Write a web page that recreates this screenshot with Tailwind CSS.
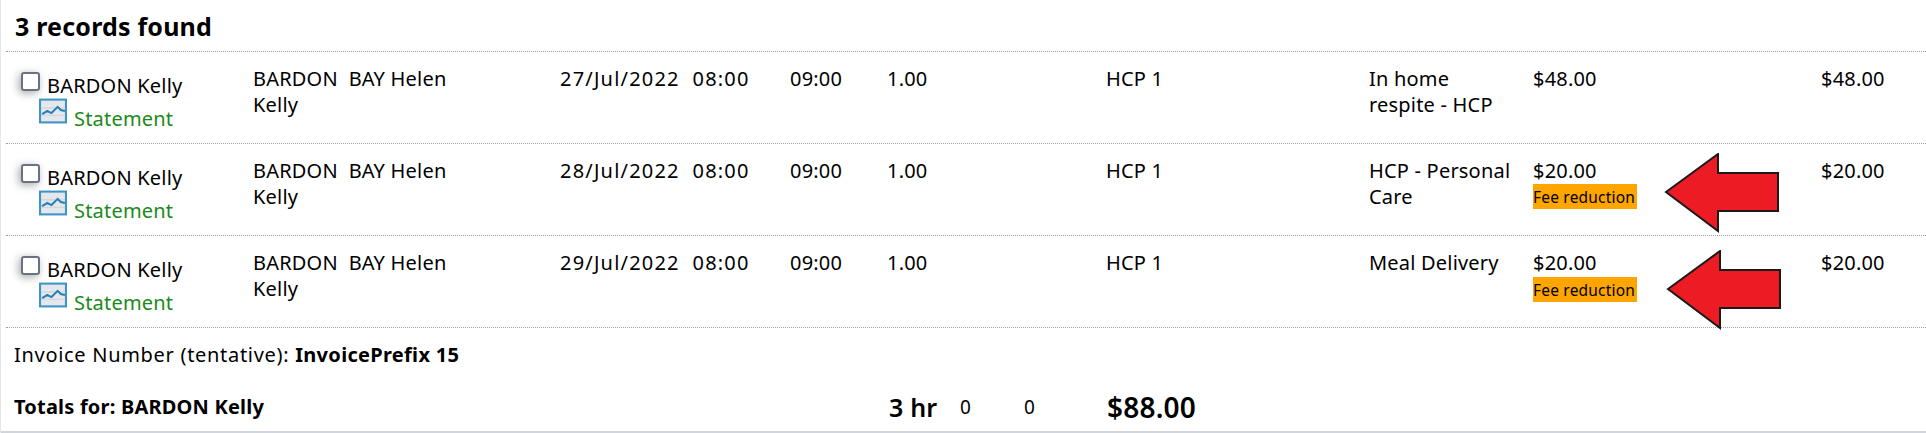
<!DOCTYPE html>
<html lang="en">
<head>
<meta charset="UTF-8">
<title>Records</title>
<script src="https://cdn.jsdelivr.net/npm/@tailwindcss/browser@4"></script>
</head>
<body class="bg-white text-black font-['Noto_Sans',sans-serif] text-[20px] leading-[26px] tracking-[0.2px] overflow-hidden">
<div class="h-[433px] flex flex-col border-l border-gray-200">
  <h2 class="h-[51px] pl-[14px] pt-[10px] text-[25px] leading-[32px] font-bold">3 records found</h2>

  <!-- rows -->
  <div class="ml-[5px] border-t border-dotted border-gray-400 flex h-[92px] pt-[14px]">
    <div class="w-[247px] shrink-0">
      <div class="flex items-start pl-[15px]">
        <input type="checkbox" class="appearance-none w-[19px] h-[19px] mt-[6px] rounded-[3px] border-2 border-gray-500 bg-white shadow-[-2px_2px_8px_rgba(0,0,0,0.35)]">
        <span class="ml-[7px] mt-[7px]">BARDON Kelly</span>
      </div>
      <div class="flex items-start pl-[33px] -mt-[1px]">
        <svg width="28" height="26" viewBox="0 0 27 24"><rect x="1" y="1" width="25" height="22" fill="#e4e8ec" stroke="#3f94c6" stroke-width="2"/><path d="M2 9h23M2 16h23" stroke="#cdd3d8"/><path d="M3 15l5-3 4 2 6-6 3 3 4 1" fill="none" stroke="#2b7fb8" stroke-width="2"/></svg>
        <span class="ml-[7px] mt-[8px] text-[#1a8a1a]">Statement</span>
      </div>
    </div>
    <div class="w-[307px] shrink-0">BARDON&nbsp; BAY Helen<br>Kelly</div>
    <div class="w-[230px] shrink-0 tracking-[1.2px]">27/Jul/2022&nbsp; 08:00</div>
    <div class="w-[97px] shrink-0">09:00</div>
    <div class="w-[219px] shrink-0">1.00</div>
    <div class="w-[263px] shrink-0">HCP 1</div>
    <div class="w-[164px] shrink-0">In home<br>respite - HCP</div>
    <div class="w-[288px] shrink-0">$48.00</div>
    <div>$48.00</div>
  </div>

  <div class="ml-[5px] border-t border-dotted border-gray-400 flex h-[92px] pt-[14px]">
    <div class="w-[247px] shrink-0">
      <div class="flex items-start pl-[15px]">
        <input type="checkbox" class="appearance-none w-[19px] h-[19px] mt-[6px] rounded-[3px] border-2 border-gray-500 bg-white shadow-[-2px_2px_8px_rgba(0,0,0,0.35)]">
        <span class="ml-[7px] mt-[7px]">BARDON Kelly</span>
      </div>
      <div class="flex items-start pl-[33px] -mt-[1px]">
        <svg width="28" height="26" viewBox="0 0 27 24"><rect x="1" y="1" width="25" height="22" fill="#e4e8ec" stroke="#3f94c6" stroke-width="2"/><path d="M2 9h23M2 16h23" stroke="#cdd3d8"/><path d="M3 15l5-3 4 2 6-6 3 3 4 1" fill="none" stroke="#2b7fb8" stroke-width="2"/></svg>
        <span class="ml-[7px] mt-[8px] text-[#1a8a1a]">Statement</span>
      </div>
    </div>
    <div class="w-[307px] shrink-0">BARDON&nbsp; BAY Helen<br>Kelly</div>
    <div class="w-[230px] shrink-0 tracking-[1.2px]">28/Jul/2022&nbsp; 08:00</div>
    <div class="w-[97px] shrink-0">09:00</div>
    <div class="w-[219px] shrink-0">1.00</div>
    <div class="w-[263px] shrink-0">HCP 1</div>
    <div class="w-[164px] shrink-0">HCP - Personal<br>Care</div>
    <div class="w-[288px] shrink-0 relative">
      <div>$20.00</div>
      <div class="w-[104px] h-[25px] bg-[#ffa500] text-[15.5px] leading-[27px] whitespace-nowrap">Fee reduction</div>
      <svg class="absolute left-[130px] top-[-5px]" width="116" height="80" viewBox="0 0 116 80"><path d="M3 39L55 1V20H115V58H55V78Z" fill="#ed1c24" stroke="#1a1a1a" stroke-width="2"/></svg>
    </div>
    <div>$20.00</div>
  </div>

  <div class="ml-[5px] border-t border-b border-dotted border-gray-400 flex h-[93px] pt-[14px]">
    <div class="w-[247px] shrink-0">
      <div class="flex items-start pl-[15px]">
        <input type="checkbox" class="appearance-none w-[19px] h-[19px] mt-[6px] rounded-[3px] border-2 border-gray-500 bg-white shadow-[-2px_2px_8px_rgba(0,0,0,0.35)]">
        <span class="ml-[7px] mt-[7px]">BARDON Kelly</span>
      </div>
      <div class="flex items-start pl-[33px] -mt-[1px]">
        <svg width="28" height="26" viewBox="0 0 27 24"><rect x="1" y="1" width="25" height="22" fill="#e4e8ec" stroke="#3f94c6" stroke-width="2"/><path d="M2 9h23M2 16h23" stroke="#cdd3d8"/><path d="M3 15l5-3 4 2 6-6 3 3 4 1" fill="none" stroke="#2b7fb8" stroke-width="2"/></svg>
        <span class="ml-[7px] mt-[8px] text-[#1a8a1a]">Statement</span>
      </div>
    </div>
    <div class="w-[307px] shrink-0">BARDON&nbsp; BAY Helen<br>Kelly</div>
    <div class="w-[230px] shrink-0 tracking-[1.2px]">29/Jul/2022&nbsp; 08:00</div>
    <div class="w-[97px] shrink-0">09:00</div>
    <div class="w-[219px] shrink-0">1.00</div>
    <div class="w-[263px] shrink-0">HCP 1</div>
    <div class="w-[164px] shrink-0">Meal Delivery</div>
    <div class="w-[288px] shrink-0 relative">
      <div>$20.00</div>
      <div class="w-[104px] h-[25px] mt-[1px] bg-[#ffa500] text-[15.5px] leading-[27px] whitespace-nowrap">Fee reduction</div>
      <svg class="absolute left-[132px] top-0" width="116" height="80" viewBox="0 0 116 80"><path d="M3 39L55 1V20H115V58H55V78Z" fill="#ed1c24" stroke="#1a1a1a" stroke-width="2"/></svg>
    </div>
    <div>$20.00</div>
  </div>

  <div class="pl-[13px] pt-[14px] tracking-[0.7px]">Invoice Number (tentative): <b class="tracking-[0.3px]">InvoicePrefix 15</b></div>
  <div class="flex items-center pl-[13px] mt-[23px] h-[32px]">
    <b class="w-[875px] shrink-0">Totals for: BARDON Kelly</b>
    <b class="w-[71px] shrink-0 text-[25px] font-semibold">3 hr</b>
    <span class="w-[64px] shrink-0 text-[19px]">0</span>
    <span class="w-[83px] shrink-0 text-[19px]">0</span>
    <b class="text-[28px] font-semibold">$88.00</b>
  </div>
  <div class="mt-auto h-[2px] bg-gray-300"></div>
</div>
</body>
</html>
